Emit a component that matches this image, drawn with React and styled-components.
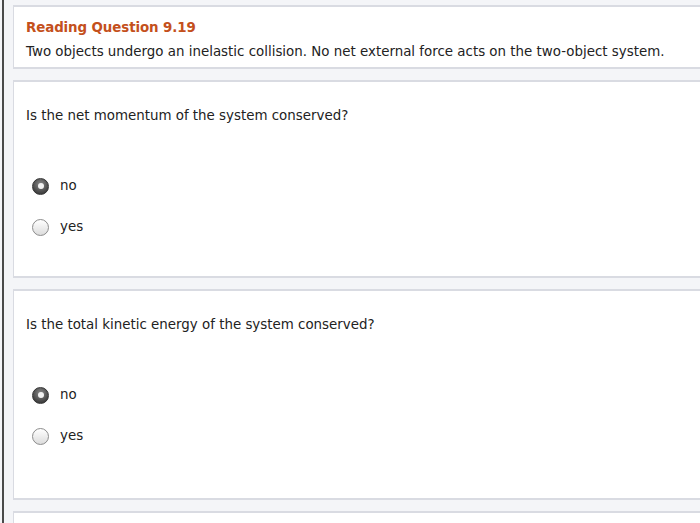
import React from "react";
import styled, { createGlobalStyle } from "styled-components";

const Global = createGlobalStyle`
  html, body { margin: 0; padding: 0; background: #f4f5f8; }
  body { font-family: "DejaVu Sans", Verdana, sans-serif; color: #222; overflow: hidden; }
`;

const Page = styled.div`
  margin-left: 2px;
  border-left: 2px solid #4a4a4a;
  padding: 5px 0 0 9px;
  height: 523px;
  box-sizing: border-box;
  overflow: hidden;
  display: flex;
  flex-direction: column;
  gap: 11px;
`;

const Card = styled.section`
  box-sizing: border-box;
  width: 720px;
  flex: none;
  background: #fff;
  border: 1px solid #d9dbe2;
  border-width: 2px 1px 2px 1px;
  height: ${(p) => p.$h}px;
  padding: ${(p) => p.$pad};
`;

const Title = styled.h2`
  margin: 0 0 6px 0;
  font-size: 13.4px;
  letter-spacing: -0.1px;
  font-weight: bold;
  color: #c4501c;
  line-height: 18px;
`;

const Text = styled.p`
  margin: 0;
  font-size: 13.4px;
  line-height: 18px;
`;

const Question = styled.p`
  margin: 0 0 ${(p) => p.$after}px -7px;
  font-size: 13.4px;
  line-height: 18px;
`;

const Options = styled.div`
  display: flex;
  flex-direction: column;
  gap: 23px;
`;

const Option = styled.label`
  display: flex;
  align-items: center;
  gap: 11px;
  font-size: 13.4px;
  line-height: 18px;
`;

const Radio = styled.span`
  width: 17px;
  height: 17px;
  margin-left: -1px;
  border-radius: 50%;
  box-sizing: border-box;
  flex: none;
  display: flex;
  align-items: center;
  justify-content: center;
  ${(p) =>
    p.$checked
      ? `background: radial-gradient(circle at 50% 35%, #8a8a8a, #3f3f3f 75%);
         border: 1px solid #333;`
      : `background: linear-gradient(#ffffff, #dcdcdc);
         border: 1px solid #8c8c8c;`}
  &::after {
    content: "";
    display: ${(p) => (p.$checked ? "block" : "none")};
    width: 6px;
    height: 6px;
    border-radius: 50%;
    background: #f2f2f2;
  }
`;

const Choice = ({ checked, children }) => (
  <Option>
    <Radio $checked={checked} />
    <span>{children}</span>
  </Option>
);

export default function App() {
  return (
    <>
      <Global />
      <Page>
        <Card $h={64} $pad="12px 12px 0 12px">
          <Title>Reading Question 9.19</Title>
          <Text>
            Two objects undergo an inelastic collision. No net external force acts on the two-object system.
          </Text>
        </Card>
        <Card $h={198} $pad="25px 12px 0 19px">
          <Question $after={52}>Is the net momentum of the system conserved?</Question>
          <Options>
            <Choice checked>no</Choice>
            <Choice>yes</Choice>
          </Options>
        </Card>
        <Card $h={211} $pad="25px 12px 0 19px">
          <Question $after={52}>Is the total kinetic energy of the system conserved?</Question>
          <Options>
            <Choice checked>no</Choice>
            <Choice>yes</Choice>
          </Options>
        </Card>
        <Card $h={40} $pad="0" />
      </Page>
    </>
  );
}
